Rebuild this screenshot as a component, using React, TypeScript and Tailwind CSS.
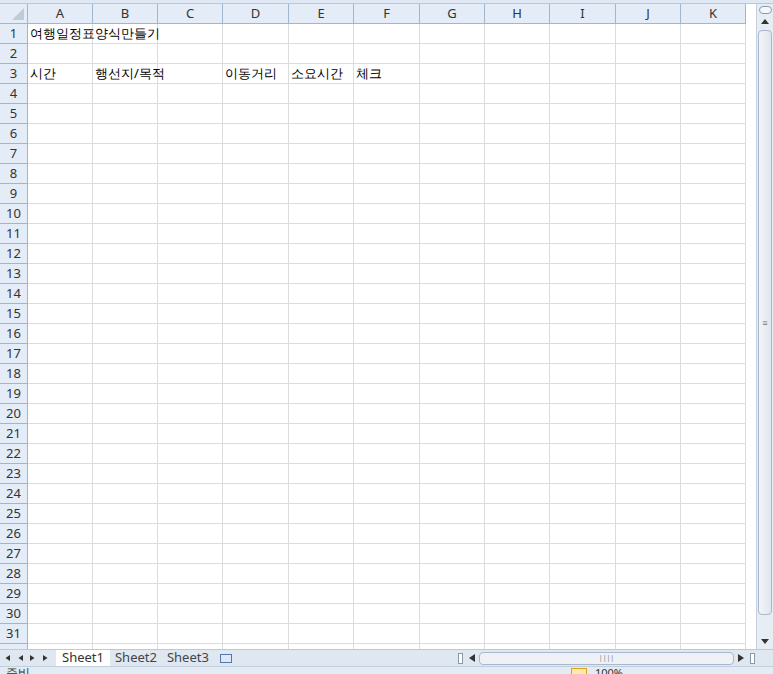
const cols = ["A", "B", "C", "D", "E", "F", "G", "H", "I", "J", "K"];
const widths = [65, 65, 65, 66, 65, 66, 65, 65, 66, 65, 65];
const font = "font-['Noto_Sans_CJK_KR','Liberation_Sans',sans-serif]";

const cells: Record<string, string> = {
  "1-0": "여행일정표양식만들기",
  "3-0": "시간",
  "3-1": "행선지/목적",
  "3-3": "이동거리",
  "3-4": "소요시간",
  "3-5": "체크",
};

function Tri({ dir, size = 4 }: { dir: "l" | "r" | "u" | "d"; size?: number }) {
  const pts =
    dir === "l" ? "8,0 8,8 2,4" : dir === "r" ? "0,0 0,8 6,4" : dir === "u" ? "0,6 8,6 4,1" : "0,2 8,2 4,7";
  return (
    <svg width={size * 2} height={size * 2} viewBox="0 0 8 8" className="shrink-0">
      <polygon points={pts} fill="#333" />
    </svg>
  );
}

function Row({ n }: { n: number }) {
  return (
    <div className="flex h-[20px] shrink-0">
      <div className="w-[28px] shrink-0 border-r border-b border-[#9eb6ce] bg-[#e4ecf7] text-center text-[13px] leading-[19px] text-[#333]">
        {n}
      </div>
      {widths.map((w, i) => (
        <div
          key={i}
          style={{ width: w }}
          className="relative shrink-0 border-r border-b border-[#dadcdd] bg-white"
        >
          {cells[`${n}-${i}`] ? (
            <span className="absolute left-[2px] top-0 z-10 whitespace-nowrap text-[13px] leading-[19px] text-black">
              {cells[`${n}-${i}`]}
            </span>
          ) : null}
        </div>
      ))}
    </div>
  );
}

export default function App() {
  const rows = Array.from({ length: 32 }, (_, i) => i + 1);
  return (
    <div className={`flex h-[674px] w-[773px] flex-col overflow-hidden bg-white ${font}`}>
      <div className="h-[4px] shrink-0 border-b border-[#b8c7db] bg-[#dfe8f4]" />
      <div className="flex h-[645px] shrink-0">
        <div className="flex min-w-0 flex-1 flex-col overflow-hidden">
          <div className="flex h-[20px] shrink-0">
            <div className="relative w-[28px] shrink-0 border-r border-b border-[#9eb6ce] bg-[#e4ecf7]">
              <div className="absolute bottom-[3px] right-[3px] h-0 w-0 border-b-[12px] border-l-[12px] border-b-[#c0cbd8] border-l-transparent" />
            </div>
            {cols.map((c, i) => (
              <div
                key={c}
                style={{ width: widths[i] }}
                className="shrink-0 border-r border-b border-[#9eb6ce] bg-[#e4ecf7] text-center text-[13px] leading-[19px] text-[#333]"
              >
                {c}
              </div>
            ))}
          </div>
          {rows.map((n) => (
            <Row key={n} n={n} />
          ))}
        </div>
        <div className="flex w-[17px] shrink-0 flex-col border-l border-[#c5d0de] bg-[#e8edf4]">
          <div className="mx-auto mt-[2px] h-[8px] w-[13px] rounded-sm border border-[#8a9bb0] bg-[#f4f7fb]" />
          <div className="flex h-[16px] items-center justify-center"><Tri dir="u" /></div>
          <div className="mx-[1px] flex h-[585px] items-center justify-center rounded-sm border border-[#a9b8ca] bg-gradient-to-r from-[#f2f5f9] to-[#dfe6ef] text-[9px] leading-none text-[#777]">
            ≡
          </div>
          <div className="flex-1" />
          <div className="flex h-[16px] items-center justify-center"><Tri dir="d" /></div>
        </div>
      </div>
      <div className="flex h-[17px] shrink-0 items-center border-t border-[#b9c9da] bg-[#dfe7f1] text-[13px]">
        <div className="flex w-[56px] items-center gap-[7px] pl-[4px]">
          <Tri dir="l" size={3} /><Tri dir="l" size={3} /><Tri dir="r" size={3} /><Tri dir="r" size={3} />
        </div>
        <div className="flex h-[17px] items-center bg-white px-[6px] text-[#333]">Sheet1</div>
        <div className="px-[5px] text-[#444]">Sheet2</div>
        <div className="px-[5px] text-[#444]">Sheet3</div>
        <div className="flex items-center px-[6px]">
          <span className="h-[9px] w-[12px] border border-[#5577aa] bg-[#dde8f6]" />
        </div>
        <div className="flex-1" />
        <div className="flex h-[13px] w-[315px] items-center gap-[4px] pr-[18px]">
          <span className="h-[11px] w-[5px] border border-[#8899aa] bg-white" />
          <Tri dir="l" />
          <div className="flex h-[13px] flex-1 items-center justify-center rounded-sm border border-[#a9b8ca] bg-[#eef2f7] text-[7px] text-[#777]">||||</div>
          <Tri dir="r" />
          <span className="h-[11px] w-[5px] border border-[#8899aa] bg-white" />
        </div>
      </div>
      <div className="flex flex-1 items-start overflow-hidden border-t border-[#c0cedd] bg-[#e3ebf5] text-[12px] text-[#333]">
        <span className="pl-[6px] leading-[12px]">준비</span>
        <div className="flex-1" />
        <span className="mr-[8px] mt-[1px] h-[8px] w-[16px] border border-[#e0a020] bg-[#fde9a8]" />
        <span className="mr-[150px] mt-[1px] text-[11px] leading-[10px]">100%</span>
      </div>
    </div>
  );
}
